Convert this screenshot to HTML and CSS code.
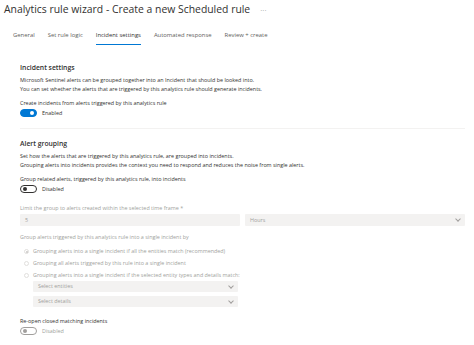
FILE: index.html
```html
<!DOCTYPE html>
<html lang="en">

<head>
    <meta charset="UTF-8">
    <title>Analytics rule wizard</title>
    <link rel="stylesheet" href="styles.css">
</head>

<body>
    <div class="header">
        <h1>Analytics rule wizard - Create a new Scheduled rule</h1>
        <span class="more">&middot;&middot;&middot;</span>
    </div>

    <div class="tabs">
        <span class="tab">General</span>
        <span class="tab">Set rule logic</span>
        <span class="tab active">Incident settings</span>
        <span class="tab">Automated response</span>
        <span class="tab">Review + create</span>
    </div>

    <div class="content">
        <div class="section">
            <h2>Incident settings</h2>
            <p>Microsoft Sentinel alerts can be grouped together into an Incident that should be looked into.<br>
                You can set whether the alerts that are triggered by this analytics rule should generate incidents.</p>
            <div class="label">Create incidents from alerts triggered by this analytics rule</div>
            <div class="toggle-row">
                <span class="toggle on"></span>
                <span>Enabled</span>
            </div>
        </div>

        <div class="section">
            <h2>Alert grouping</h2>
            <p>Set how the alerts that are triggered by this analytics rule, are grouped into incidents.<br>
                Grouping alerts into incidents provides the context you need to respond and reduces the noise from single alerts.</p>
            <div class="label">Group related alerts, triggered by this analytics rule, into incidents</div>
            <div class="toggle-row">
                <span class="toggle"></span>
                <span>Disabled</span>
            </div>

            <div class="label disabled limit">Limit the group to alerts created within the selected time frame *</div>
            <div class="field-row">
                <div class="input">5</div>
                <div class="input select">Hours</div>
            </div>

            <div class="label disabled group">Group alerts triggered by this analytics rule into a single incident by</div>
            <div class="radios">
                <div class="radio"><span class="dot checked"></span>Grouping alerts into a single incident if all the entities match (recommended)</div>
                <div class="radio"><span class="dot"></span>Grouping all alerts triggered by this rule into a single incident</div>
                <div class="radio"><span class="dot"></span>Grouping alerts into a single incident if the selected entity types and details match:</div>
                <div class="input select sub">Select entities</div>
                <div class="input select sub">Select details</div>
            </div>

            <div class="label reopen">Re-open closed matching incidents</div>
            <div class="toggle-row faded">
                <span class="toggle"></span>
                <span>Disabled</span>
            </div>
        </div>
    </div>
</body>

</html>
```

FILE: styles.css
```css
body {
    font-family: "Open Sans", sans-serif;
    margin: 0;
    color: #323130;
    background: #fff;
    font-size: 5.4px;
}

.header {
    display: flex;
    align-items: center;
    padding: 1px 4px 0;
    height: 16px;
}

h1 {
    font-size: 10.4px;
    font-weight: 400;
    margin: 0;
}

.more {
    margin-left: 10px;
    color: #a19f9d;
    font-size: 8px;
}

.tabs {
    display: flex;
    gap: 13px;
    padding: 0 13px;
    margin-top: 11px;
    height: 17px;
}

.tab {
    line-height: 15px;
    color: #605e5c;
    font-size: 5.9px;
}

.tab.active {
    color: #323130;
    border-bottom: 1.5px solid #0078d4;
}

.content {
    padding: 0 9px 0 20px;
}

.section {
    padding-top: 18px;
}

.section + .section {
    border-top: 1px solid #f3f2f1;
    margin-top: 11px;
    padding-top: 10px;
}

h2 {
    font-size: 6.8px;
    font-weight: 600;
    margin: 0 0 3px;
    line-height: 10px;
}

p {
    margin: 0 0 5px;
    line-height: 9px;
}

.label {
    line-height: 9px;
}

.label.disabled {
    color: #a19f9d;
}

.toggle-row {
    display: flex;
    align-items: center;
    gap: 5px;
    height: 9px;
}

.toggle-row.faded {
    color: #a19f9d;
}

.toggle {
    box-sizing: border-box;
    width: 17px;
    height: 8px;
    border-radius: 4px;
    border: 1px solid #323130;
    position: relative;
}

.toggle::after {
    content: "";
    position: absolute;
    top: 1px;
    left: 2px;
    width: 4px;
    height: 4px;
    border-radius: 50%;
    background: #323130;
}

.toggle.on {
    background: #0078d4;
    border-color: #0078d4;
}

.toggle.on::after {
    left: auto;
    right: 2px;
    background: #fff;
}

.faded .toggle {
    border-color: #a19f9d;
}

.faded .toggle::after {
    background: #a19f9d;
}

.limit {
    margin-top: 11px;
}

.field-row {
    display: flex;
    gap: 5px;
    margin-top: 1px;
}

.input {
    box-sizing: border-box;
    flex: 1;
    height: 12px;
    line-height: 12px;
    padding: 0 5px;
    background: #f3f2f1;
    color: #a19f9d;
    border-radius: 1px;
}

.select {
    position: relative;
}

.select::after {
    content: "";
    position: absolute;
    right: 5px;
    top: 3px;
    width: 3px;
    height: 3px;
    border-right: 0.7px solid #a19f9d;
    border-bottom: 0.7px solid #a19f9d;
    transform: rotate(45deg);
}

.group {
    margin-top: 7px;
}

.radios {
    padding-left: 4px;
    margin-top: 3px;
}

.radio {
    display: flex;
    align-items: center;
    gap: 4px;
    height: 12px;
    color: #a19f9d;
}

.dot {
    box-sizing: border-box;
    width: 5px;
    height: 5px;
    border-radius: 50%;
    border: 0.5px solid #e1dfdd;
    position: relative;
}

.dot.checked::after {
    content: "";
    position: absolute;
    left: 1px;
    top: 1px;
    width: 2px;
    height: 2px;
    border-radius: 50%;
    background: #c8c6c4;
}

.input.sub {
    width: 205px;
    flex: none;
    margin-left: 9px;
    height: 11px;
    line-height: 11px;
    margin-bottom: 4px;
}

.reopen {
    margin-top: 10px;
}
```
